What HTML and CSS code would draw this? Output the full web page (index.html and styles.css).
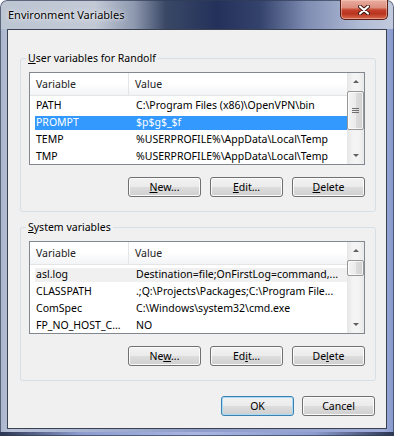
FILE: index.html
```html
<!DOCTYPE html>
<html lang="en">
<head>
  <meta charset="UTF-8">
  <title>Environment Variables</title>
  <link rel="stylesheet" href="styles.css">
</head>
<body>
  <div class="window">
    <div class="titlebar">
      <span class="title">Environment Variables</span>
      <div class="close">
        <svg width="12" height="10" viewBox="0 0 12 10">
          <path d="M2 1.5 L10 8.5 M10 1.5 L2 8.5" stroke="#3a1410" stroke-width="4" stroke-linecap="round"/>
          <path d="M2 1.5 L10 8.5 M10 1.5 L2 8.5" stroke="#ffffff" stroke-width="2.2" stroke-linecap="round"/>
        </svg>
      </div>
    </div>

    <div class="client">
      <fieldset class="group">
        <legend><u>U</u>ser variables for Randolf</legend>
        <div class="list">
          <div class="list-body">
            <div class="list-head">
              <span class="head-name">Variable</span>
              <span class="head-value">Value</span>
            </div>
            <div class="rows">
              <div class="row"><span class="cell-name">PATH</span><span class="cell-value">C:\Program Files (x86)\OpenVPN\bin</span></div>
              <div class="row selected"><span class="cell-name">PROMPT</span><span class="cell-value">$p$g$_$f</span></div>
              <div class="row"><span class="cell-name">TEMP</span><span class="cell-value">%USERPROFILE%\AppData\Local\Temp</span></div>
              <div class="row"><span class="cell-name">TMP</span><span class="cell-value">%USERPROFILE%\AppData\Local\Temp</span></div>
            </div>
          </div>
          <div class="scrollbar">
            <div class="sb-arrow"><span class="arrow-up"></span></div>
            <div class="sb-track"><div class="sb-thumb thumb-user"></div></div>
            <div class="sb-arrow"><span class="arrow-down"></span></div>
          </div>
        </div>
        <div class="actions">
          <button class="btn"><u>N</u>ew...</button>
          <button class="btn"><u>E</u>dit...</button>
          <button class="btn"><u>D</u>elete</button>
        </div>
      </fieldset>

      <fieldset class="group group-system">
        <legend><u>S</u>ystem variables</legend>
        <div class="list">
          <div class="list-body">
            <div class="list-head">
              <span class="head-name">Variable</span>
              <span class="head-value">Value</span>
            </div>
            <div class="rows">
              <div class="row inactive"><span class="cell-name">asl.log</span><span class="cell-value">Destination=file;OnFirstLog=command,...</span></div>
              <div class="row"><span class="cell-name">CLASSPATH</span><span class="cell-value">.;Q:\Projects\Packages;C:\Program File...</span></div>
              <div class="row"><span class="cell-name">ComSpec</span><span class="cell-value">C:\Windows\system32\cmd.exe</span></div>
              <div class="row"><span class="cell-name">FP_NO_HOST_C...</span><span class="cell-value">NO</span></div>
            </div>
          </div>
          <div class="scrollbar">
            <div class="sb-arrow"><span class="arrow-up"></span></div>
            <div class="sb-track"><div class="sb-thumb thumb-system"></div></div>
            <div class="sb-arrow"><span class="arrow-down"></span></div>
          </div>
        </div>
        <div class="actions">
          <button class="btn">Ne<u>w</u>...</button>
          <button class="btn">Ed<u>i</u>t...</button>
          <button class="btn">De<u>l</u>ete</button>
        </div>
      </fieldset>

      <div class="dialog-actions">
        <button class="btn btn-default">OK</button>
        <button class="btn">Cancel</button>
      </div>
    </div>
  </div>
</body>
</html>
```

FILE: styles.css
```css
body {
  margin: 0;
  background: #ffffff;
  font-family: "Segoe UI", "Noto Sans", sans-serif;
  font-size: 10.5px;
  color: #000;
}

.window {
  width: 394px;
  height: 436px;
  box-sizing: border-box;
  display: flex;
  flex-direction: column;
  border-radius: 7px 7px 0 0;
  background:
    linear-gradient(90deg, #bcc5d2 0%, #c3cad6 24%, #8e99b0 34%, #3a4866 42%, #24315a 55%, #34436c 66%, #7f8db3 78%, #b2bdd6 92%, #c2cadc 100%) top / 100% 29px no-repeat,
    linear-gradient(90deg, #2a3550 0%, #8c9bcd 20%, #a9b6e2 50%, #8c9bcd 80%, #2a3550 100%) bottom / 100% 4px no-repeat,
    linear-gradient(90deg, #aab6cc 0%, #b8c2d8 3%, #8e9dc9 50%, #9cabd8 97%, #8898cc 100%);
  box-shadow: inset 0 0 0 1px rgba(50, 60, 85, 0.7);
}

.titlebar {
  display: flex;
  height: 29px;
  flex-shrink: 0;
}

.title {
  padding-left: 8px;
  line-height: 29px;
  font-size: 11px;
  text-shadow: 0 0 6px rgba(255, 255, 255, 0.9), 0 0 2px rgba(255, 255, 255, 0.8);
}

.close {
  margin-left: auto;
  margin-right: 6px;
  width: 48px;
  height: 20px;
  box-sizing: border-box;
  border: 1px solid #5a1e18;
  border-top: none;
  border-radius: 0 0 5px 5px;
  background: linear-gradient(#e9aca0 0%, #dc8f7e 40%, #c5432d 52%, #b9341f 72%, #d66a4f 100%);
  box-shadow: inset 0 0 0 1px rgba(255, 215, 200, 0.45);
  display: flex;
  align-items: center;
  justify-content: center;
}

.client {
  flex: 1;
  margin: 0 7px 7px;
  background: #f0f0f0;
  border: 1px solid #3a4252;
  padding: 21px 10px 0 12px;
}

.group {
  margin: 0;
  padding: 7px 10px 14px 8px;
  border: 1px solid #d5dfe5;
  border-radius: 3px;
  min-width: 0;
}

.group-system {
  margin-top: 8px;
}

.group legend {
  margin-left: -3px;
  padding: 0 2px;
  line-height: 14px;
}

.list {
  display: flex;
  height: 93px;
  box-sizing: border-box;
  border: 1px solid #828790;
  background: #ffffff;
  overflow: hidden;
}

.list-body {
  flex: 1;
  min-width: 0;
}

.list-head {
  display: flex;
  height: 22px;
  line-height: 22px;
  border-bottom: 1px solid #e5e5e5;
  background: linear-gradient(#ffffff 45%, #f3f4f6 100%);
  color: #222;
}

.head-name {
  width: 99px;
  padding-left: 6px;
  box-sizing: border-box;
  border-right: 1px solid #e3e5e8;
}

.head-value {
  padding-left: 6px;
}

.rows {
  padding-top: 1px;
}

.row {
  display: flex;
  height: 17px;
  line-height: 17px;
  margin-left: 5px;
  white-space: nowrap;
  overflow: hidden;
}

.row.selected {
  background: linear-gradient(transparent 2px, #3399ff 2px, #3399ff 16px, transparent 16px);
  color: #ffffff;
}

.row.inactive {
  background: linear-gradient(transparent 2px, #f0f0f0 2px, #f0f0f0 16px, transparent 16px);
}

.cell-name {
  width: 94px;
  flex-shrink: 0;
  padding-left: 1px;
  box-sizing: border-box;
  overflow: hidden;
}

.cell-value {
  padding-left: 7px;
}

.scrollbar {
  width: 17px;
  flex-shrink: 0;
  display: flex;
  flex-direction: column;
  background: linear-gradient(90deg, #e6e6e6, #f4f4f4 35%, #f4f4f4 65%, #e9e9e9);
}

.sb-arrow {
  height: 17px;
  display: flex;
  align-items: center;
  justify-content: center;
}

.arrow-up,
.arrow-down {
  width: 0;
  height: 0;
  border-left: 3px solid transparent;
  border-right: 3px solid transparent;
}

.arrow-up {
  border-bottom: 3px solid #606060;
}

.arrow-down {
  border-top: 3px solid #606060;
}

.sb-track {
  flex: 1;
}

.sb-thumb {
  margin-top: 1px;
  box-sizing: border-box;
  border: 1px solid #979797;
  border-radius: 2px;
  background: linear-gradient(90deg, #f4f4f4, #ebebeb 50%, #dcdcdc 51%, #d2d2d2);
  box-shadow: inset 0 0 0 1px rgba(255, 255, 255, 0.7);
  display: flex;
  align-items: center;
  justify-content: center;
}

.thumb-user {
  height: 39px;
}

.thumb-user::after {
  content: '';
  width: 7px;
  height: 5px;
  background: repeating-linear-gradient(#6e6e6e 0 1px, transparent 1px 2px);
}

.thumb-system {
  height: 16px;
}

.actions {
  display: flex;
  justify-content: flex-end;
  gap: 9px;
  margin-top: 12px;
}

.btn {
  width: 73px;
  height: 20px;
  padding: 0;
  border: 1px solid #707070;
  border-radius: 3px;
  background: linear-gradient(#f2f2f2 0%, #ebebeb 50%, #dddddd 50%, #cfcfcf 100%);
  box-shadow: inset 0 0 0 1px #fbfbfb;
  font: inherit;
  color: #000;
}

.btn-default {
  border-color: #3c7fb1;
  box-shadow: inset 0 0 0 1px #a9dbf5;
}

.dialog-actions {
  display: flex;
  justify-content: flex-end;
  gap: 8px;
  margin-top: 15px;
  margin-right: 1px;
}
```
